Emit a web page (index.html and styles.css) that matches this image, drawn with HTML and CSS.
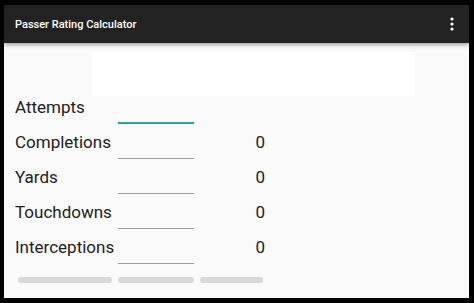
FILE: index.html
```html
<!DOCTYPE html>
<html>
<head>
<meta charset="utf-8">
<link rel="stylesheet" href="styles.css">
</head>
<body>
<div class="window">
  <header class="appbar">
    <span class="title">Passer Rating Calculator</span>
    <svg class="menu" width="4" height="14" viewBox="0 0 4 14">
      <circle cx="2" cy="2" r="1.6" fill="#fff"/>
      <circle cx="2" cy="7" r="1.6" fill="#fff"/>
      <circle cx="2" cy="12" r="1.6" fill="#fff"/>
    </svg>
  </header>
  <main class="content">
    <div class="rating-box"></div>
    <div class="form">
      <div class="label">Attempts</div>
      <div class="field focused"></div>
      <div class="value"></div>

      <div class="label">Completions</div>
      <div class="field"></div>
      <div class="value">0</div>

      <div class="label">Yards</div>
      <div class="field"></div>
      <div class="value">0</div>

      <div class="label">Touchdowns</div>
      <div class="field"></div>
      <div class="value">0</div>

      <div class="label">Interceptions</div>
      <div class="field"></div>
      <div class="value">0</div>
    </div>
    <div class="buttons">
      <div class="btn btn-a"></div>
      <div class="btn btn-b"></div>
      <div class="btn btn-c"></div>
    </div>
  </main>
</div>
</body>
</html>
```
FILE: styles.css
```css
html, body {
  margin: 0;
  padding: 0;
  background: #000;
}
body {
  width: 474px;
  height: 303px;
  overflow: hidden;
  padding: 5px 5px 5px 4px;
  box-sizing: border-box;
  font-family: Roboto, "Liberation Sans", sans-serif;
}
.window {
  width: 465px;
  height: 293px;
  background: #fafafa;
  display: flex;
  flex-direction: column;
  overflow: hidden;
}
.appbar {
  height: 38px;
  flex: none;
  background: #222222;
  display: flex;
  align-items: center;
  padding: 0 15px 0 11px;
  box-shadow: 0 2px 4px rgba(0,0,0,0.35);
  position: relative;
  z-index: 1;
}
.title {
  color: #fff;
  font-size: 11px;
  font-weight: 500;
  flex: 1;
  padding-top: 1px;
}
.menu {
  display: block;
  margin-right: 0;
}
.content {
  flex: 1;
  display: flex;
  flex-direction: column;
}
.rating-box {
  margin: 9px 0 0 88px;
  width: 323px;
  height: 44px;
  background: #ffffff;
}
.form {
  display: grid;
  grid-template-columns: 103px 76px 71px;
  grid-auto-rows: 35px;
  padding-left: 11px;
}
.label, .value {
  font-size: 17px;
  line-height: 20px;
  color: #212121;
  padding-top: 1px;
}
.value {
  text-align: right;
}
.field {
  height: 28px;
  box-sizing: border-box;
  border-bottom: 1px solid #9e9e9e;
}
.field.focused {
  border-bottom: 2px solid #26a69a;
}
.buttons {
  display: flex;
  padding-left: 14px;
  margin-top: 6px;
}
.btn {
  height: 6px;
  background: #d8d8d8;
  border-radius: 3px;
}
.btn-a { width: 94px; }
.btn-b { width: 76px; margin-left: 6px; }
.btn-c { width: 63px; margin-left: 6px; }
```
